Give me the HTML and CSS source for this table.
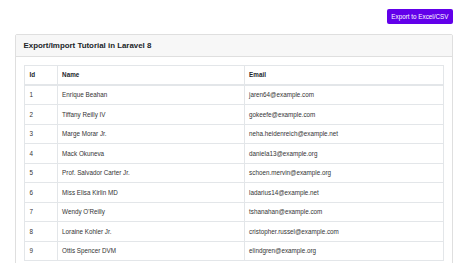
FILE: index.html
```html
<!DOCTYPE html>
<html>
<head>
    <title>Export/Import Tutorial in Laravel 8</title>
    <link rel="stylesheet" href="styles.css">
</head>
<body>
    <div class="container">
        <div class="toolbar">
            <a class="btn-export" href="#">Export to Excel/CSV</a>
        </div>

        <div class="card">
            <div class="card-header">
                <h2>Export/Import Tutorial in Laravel 8</h2>
            </div>
            <div class="card-body">
                <table class="users">
                    <colgroup>
                        <col class="col-id">
                        <col class="col-name">
                        <col>
                    </colgroup>
                    <thead>
                        <tr><th>Id</th><th>Name</th><th>Email</th></tr>
                    </thead>
                    <tbody>
                        <tr><td>1</td><td>Enrique Beahan</td><td>jaren64@example.com</td></tr>
                        <tr><td>2</td><td>Tiffany Reilly IV</td><td>gokeefe@example.com</td></tr>
                        <tr><td>3</td><td>Marge Morar Jr.</td><td>neha.heidenreich@example.net</td></tr>
                        <tr><td>4</td><td>Mack Okuneva</td><td>daniela13@example.org</td></tr>
                        <tr><td>5</td><td>Prof. Salvador Carter Jr.</td><td>schoen.mervin@example.org</td></tr>
                        <tr><td>6</td><td>Miss Elisa Kirlin MD</td><td>ladarius14@example.net</td></tr>
                        <tr><td>7</td><td>Wendy O'Reilly</td><td>tshanahan@example.com</td></tr>
                        <tr><td>8</td><td>Loraine Kohler Jr.</td><td>cristopher.russel@example.com</td></tr>
                        <tr><td>9</td><td>Ottis Spencer DVM</td><td>elindgren@example.org</td></tr>
                    </tbody>
                </table>
            </div>
        </div>
    </div>
</body>
</html>
```

FILE: styles.css
```css
body { margin: 0; font-family: "Liberation Sans", Arial, sans-serif; font-size: 6.3px; color: #212529; background: #fff; }
.container { padding: 9px 21px 0 15px; }
.toolbar { display: flex; justify-content: flex-end; margin-bottom: 10px; }
.btn-export { display: block; background: #6200ea; color: #fff; text-decoration: none; line-height: 9.5px; padding: 2.75px 4.6px; border-radius: 2px; }
.card { border: 1px solid #dfdfdf; border-radius: 2px; height: 400px; }
.card-header { background: #f7f7f7; border-bottom: 1px solid #dfdfdf; height: 21px; display: flex; align-items: center; padding: 0 7.5px; }
.card-header h2 { margin: 0; font-size: 7.9px; font-weight: bold; line-height: 1; }
.card-body { padding: 8px; }
.users { width: 100%; border-collapse: collapse; table-layout: fixed; }
.col-id { width: 32.5px; }
.col-name { width: 187px; }
.users th, .users td { border: 1px solid #e3e6e9; text-align: left; padding: 4.5px 4.6px; line-height: 9.55px; }
.users th { font-weight: bold; border-bottom-width: 2px; padding: 4px 4.6px; }
.users td { color: #333; }
```
